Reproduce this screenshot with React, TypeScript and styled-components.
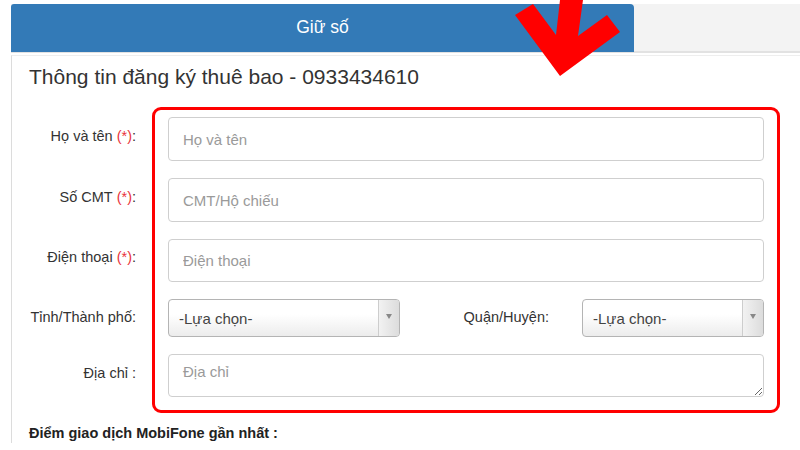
import React from "react";
import styled, { createGlobalStyle } from "styled-components";

const Global = createGlobalStyle`
  html, body { margin: 0; padding: 0; background: #fff; }
  body { font-family: "Liberation Sans", Arial, sans-serif; color: #333; }
  * { box-sizing: border-box; }
`;

const Page = styled.div`
  position: relative;
  width: 800px;
  height: 450px;
  overflow: hidden;
  padding: 4px 0 0 11px;
`;

const TabBar = styled.div`
  display: flex;
  height: 49px;
  background: #f3f3f3;
  border-bottom: 2px solid #e2e2e2;
`;

const Tab = styled.div<{ $active?: boolean }>`
  width: 623px;
  height: 48px;
  display: flex;
  align-items: center;
  justify-content: center;
  background: ${(p) => (p.$active ? "#337ab7" : "transparent")};
  color: #fff;
  font-size: 17.5px;
  border-radius: 3px 4px 0 0;
  padding-bottom: 2px;
`;

const Panel = styled.div`
  margin-top: 2px;
  border-left: 1px solid #dcdcdc;
  border-top: 1px solid #eee;
  padding: 10px 0 0 17px;
`;

const Title = styled.h2`
  margin: 0;
  font-weight: normal;
  font-size: 21px;
  line-height: 22px;
  color: #333;
`;

const Form = styled.div`
  position: relative;
  margin-top: 29px;
  display: grid;
  grid-template-columns: 107px 596px;
  column-gap: 32px;
  row-gap: 17px;
`;

const Label = styled.div<{ $h: number; $pb: number }>`
  height: ${(p) => p.$h}px;
  display: flex;
  align-items: center;
  justify-content: flex-end;
  font-size: 14.5px;
  color: #333;
  white-space: nowrap;
  padding-bottom: ${(p) => p.$pb}px;
`;

const Req = styled.span`
  color: #e8343b;
  margin-left: 4px;
`;

const TextInput = styled.input<{ $h: number }>`
  height: ${(p) => p.$h}px;
  width: 100%;
  border: 1px solid #cfcfcf;
  border-radius: 4px;
  padding: 0 14px;
  font-family: "Liberation Sans", Arial, sans-serif;
  font-size: 15px;
  color: #555;
  background: #fff;
  outline: none;
  &::placeholder { color: #9a9a9a; }
`;

const TextArea = styled.textarea`
  height: 43px;
  width: 100%;
  border: 1px solid #cfcfcf;
  border-radius: 4px;
  padding: 8px 14px;
  font-family: "Liberation Sans", Arial, sans-serif;
  font-size: 15px;
  resize: vertical;
  outline: none;
  display: block;
  &::placeholder { color: #9a9a9a; }
`;

const SelectRow = styled.div`
  display: flex;
  align-items: center;
  height: 38px;
`;

const InlineLabel = styled.div`
  flex: 1;
  text-align: right;
  padding-right: 33px;
  font-size: 14.5px;
  color: #333;
  padding-bottom: 2px;
`;

const SelectBox = styled.div<{ $w: number }>`
  width: ${(p) => p.$w}px;
  height: 38px;
  display: flex;
  border: 1px solid #b4b4b4;
  border-radius: 4px;
  background: linear-gradient(#ffffff 40%, #ececec);
  overflow: hidden;
`;

const SelectText = styled.div`
  flex: 1;
  display: flex;
  align-items: center;
  padding-left: 10px;
  font-size: 15px;
  color: #444;
`;

const ArrowBox = styled.div`
  width: 21px;
  border-left: 1px solid #cdcdcd;
  background: linear-gradient(to right, #f2f2f2, #dcdcdc);
  display: flex;
  align-items: center;
  justify-content: center;
  padding-bottom: 4px;
  &::after {
    content: "";
    border-left: 3px solid transparent;
    border-right: 3px solid transparent;
    border-top: 5px solid #888;
  }
`;

const Highlight = styled.div`
  position: absolute;
  top: -10px;
  left: 123px;
  width: 628px;
  height: 306px;
  border: 3px solid #ff0000;
  border-radius: 9px;
  pointer-events: none;
`;

const Section = styled.div`
  margin-top: 26px;
  font-size: 14.5px;
  line-height: 20px;
  font-weight: bold;
  color: #222;
`;

const ArrowMark = styled.svg`
  position: absolute;
  left: 0;
  top: 0;
  pointer-events: none;
`;

type Field = { label: string; req?: boolean; placeholder: string; h: number };

const fields: Field[] = [
  { label: "Họ và tên", req: true, placeholder: "Họ và tên", h: 44 },
  { label: "Số CMT", req: true, placeholder: "CMT/Hộ chiếu", h: 44 },
  { label: "Điện thoại", req: true, placeholder: "Điện thoại", h: 43 },
];

const Select = ({ w }: { w: number }) => (
  <SelectBox $w={w}>
    <SelectText>-Lựa chọn-</SelectText>
    <ArrowBox />
  </SelectBox>
);

export default function App() {
  return (
    <>
      <Global />
      <Page>
        <TabBar>
          <Tab $active>Giữ số</Tab>
        </TabBar>
        <Panel>
          <Title>Thông tin đăng ký thuê bao - 0933434610</Title>
          <Form>
            {fields.map((f) => (
              <React.Fragment key={f.label}>
                <Label $h={f.h} $pb={7}>
                  {f.label}
                  {f.req && <Req>(*)</Req>}:
                </Label>
                <TextInput $h={f.h} placeholder={f.placeholder} />
              </React.Fragment>
            ))}
            <Label $h={38} $pb={2}>Tỉnh/Thành phố:</Label>
            <SelectRow>
              <Select w={232} />
              <InlineLabel>Quận/Huyện:</InlineLabel>
              <Select w={182} />
            </SelectRow>
            <Label $h={43} $pb={5}>Địa chỉ :</Label>
            <TextArea placeholder="Địa chỉ" />
            <Highlight />
          </Form>
          <Section>Điểm giao dịch MobiFone gần nhất :</Section>
        </Panel>
        <ArrowMark width="800" height="90" viewBox="0 0 800 90">
          <polygon
            points="560,0 556,35 533,4 515,15 560,76 620,32 607,15 578,36 583,0"
            fill="#ff0000"
          />
        </ArrowMark>
      </Page>
    </>
  );
}
